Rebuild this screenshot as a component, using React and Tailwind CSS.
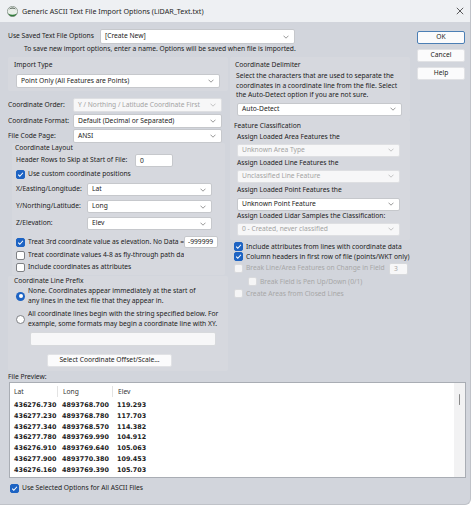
import React from "react"

const Chevron = ({ dis }) => (
  <svg width="6" height="4" viewBox="0 0 6 4" className="shrink-0">
    <path d="M0.5 0.7 L3 3.2 L5.5 0.7" fill="none" stroke={dis ? "#b5b5b5" : "#7d7d7d"} strokeWidth="0.8" />
  </svg>
)

const Select = ({ value, dis, cls }) => (
  <div
    className={`flex items-center justify-between border rounded-[2px] pl-[4px] pr-[5px] whitespace-nowrap overflow-hidden ${
      dis ? "bg-[#f7f7f8] border-[#dedfe2] text-[#a3a3a3]" : "bg-white border-[#c6c8cc] text-[#1b1b1b]"
    } ${cls}`}
  >
    <span>{value}</span>
    <Chevron dis={dis} />
  </div>
)

const Check = ({ on, dis }) => (
  <span
    className={`shrink-0 w-[9px] h-[9px] rounded-[2px] flex items-center justify-center border ${
      on ? "bg-[#1d63c3] border-[#1d63c3]" : dis ? "bg-[#f5f5f6] border-[#d9dadd]" : "bg-white border-[#7f8185]"
    }`}
  >
    {on && (
      <svg width="7" height="7" viewBox="0 0 8 8">
        <path d="M1.3 4.2 L3.2 6 L6.8 2" fill="none" stroke="white" strokeWidth="1.2" />
      </svg>
    )}
  </span>
)

const CheckRow = ({ on, dis, children, cls }) => (
  <div className={`flex items-center gap-[3px] h-[10px] whitespace-nowrap ${dis ? "text-[#a7a7a7]" : ""} ${cls}`}>
    <Check on={on} dis={dis} />
    <span className="leading-[10px]">{children}</span>
  </div>
)

const Radio = ({ on }) =>
  on ? (
    <span className="shrink-0 w-[9px] h-[9px] rounded-full bg-[#1d63c3] flex items-center justify-center">
      <span className="w-[4px] h-[4px] rounded-full bg-white" />
    </span>
  ) : (
    <span className="shrink-0 w-[9px] h-[9px] rounded-full bg-white border border-[#7f8185]" />
  )

const Btn = ({ children, ok, cls }) => (
  <div
    className={`flex items-center justify-center h-[13px] rounded-[2px] bg-[#fbfbfc] border ${
      ok ? "border-[#4c7fb5]" : "border-[#e1e2e5]"
    } ${cls}`}
  >
    {children}
  </div>
)

const rows = [
  ["436276.730", "4893768.700", "119.293"],
  ["436277.230", "4893768.780", "117.703"],
  ["436277.340", "4893768.570", "114.382"],
  ["436277.780", "4893769.990", "104.912"],
  ["436276.910", "4893769.640", "105.063"],
  ["436277.900", "4893770.380", "109.453"],
  ["436276.160", "4893769.390", "105.703"],
]

export default function App() {
  return (
    <div className="w-[474px] h-[506px] bg-white font-['Noto_Sans',sans-serif] text-[6.7px] text-[#1b1b1b]">
      <div className="w-[471px] h-[505px] bg-[#d2d5dc] rounded-br-[6px] border-r border-b border-[#bfc2c8] flex flex-col overflow-hidden">
        {/* title bar */}
        <div className="h-[22px] shrink-0 bg-[#eef0f3] flex items-center pl-[7px] pr-[6px]">
          <svg width="11" height="11" viewBox="0 0 12 12">
            <circle cx="6" cy="6" r="5.6" fill="#e9efe9" />
            <path d="M1 6.5 A5 5 0 0 0 11 6.5 A5 3 0 0 1 1 6.5Z" fill="#2f7d3a" />
            <path d="M2 4 A4.5 4.5 0 0 1 10 4 A4.5 2.5 0 0 0 2 4Z" fill="#3c4a3f" />
            <circle cx="6" cy="6" r="5.6" fill="none" stroke="#5c6b60" strokeWidth="0.6" />
          </svg>
          <span className="ml-[4px] text-[7.15px] text-[#1f1f1f]">Generic ASCII Text File Import Options (LiDAR_Text.txt)</span>
          <svg width="8" height="8" viewBox="0 0 8 8" className="ml-auto">
            <path d="M0.8 0.8 L7.2 7.2 M7.2 0.8 L0.8 7.2" stroke="#333" strokeWidth="0.8" />
          </svg>
        </div>

        {/* body */}
        <div className="flex-1 flex flex-col pl-[8px] pr-[5px] pt-[7px]">
          <div className="flex">
            <div className="w-[402px] flex flex-col">
              <div className="flex items-center h-[15px]">
                <span className="w-[92px] whitespace-nowrap">Use Saved Text File Options</span>
                <Select value="[Create New]" cls="w-[195px] h-[15px]" />
              </div>
              <div className="h-[10px] leading-[10px] pl-[16px] whitespace-nowrap">
                To save new import options, enter a name. Options will be saved when file is imported.
              </div>

              <div className="flex">
                {/* left column */}
                <div className="w-[220px] flex flex-col">
                  <div className="mt-[3px] pt-[3px] pb-[3px] bg-[#d6d8de] rounded-[2px]">
                    <div className="h-[10px] leading-[10px] pl-[6px]">Import Type</div>
                    <Select value="Point Only (All Features are Points)" cls="mt-[4px] ml-[8px] w-[204px] h-[14px]" />
                  </div>

                  <div className="mt-[7px] flex items-center h-[14px]">
                    <span className="w-[65px] whitespace-nowrap">Coordinate Order:</span>
                    <Select dis value="Y / Northing / Latitude Coordinate First" cls="w-[149px] h-[14px]" />
                  </div>
                  <div className="mt-[2px] flex items-center h-[14px]">
                    <span className="w-[65px] whitespace-nowrap">Coordinate Format:</span>
                    <Select value="Default (Decimal or Separated)" cls="w-[149px] h-[14px]" />
                  </div>
                  <div className="mt-[1px] flex items-center h-[14px]">
                    <span className="w-[65px] whitespace-nowrap">File Code Page:</span>
                    <Select value="ANSI" cls="w-[149px] h-[14px]" />
                  </div>

                  <div className="ml-[4px] w-[213px] bg-[#d6d8de] rounded-[2px] pb-[3px]">
                    <div className="h-[10px] leading-[10px] pl-[3px]">Coordinate Layout</div>
                    <div className="mt-[1px] flex items-center h-[13px] pl-[4px]">
                      <span className="w-[119px] whitespace-nowrap">Header Rows to Skip at Start of File:</span>
                      <div className="w-[38px] h-[13px] bg-white border border-[#c6c8cc] rounded-[2px] pl-[4px] leading-[11px]">0</div>
                    </div>
                    <CheckRow on cls="mt-[2px] pl-[4px]">Use custom coordinate positions</CheckRow>
                    {[
                      ["X/Easting/Longitude:", "Lat"],
                      ["Y/Northing/Latitude:", "Long"],
                      ["Z/Elevation:", "Elev"],
                    ].map(([l, v]) => (
                      <div key={l} className="mt-[4px] flex items-center h-[13px] pl-[4px]">
                        <span className="w-[71px] whitespace-nowrap">{l}</span>
                        <Select value={v} cls="w-[125px] h-[13px]" />
                      </div>
                    ))}
                    <div className="mt-[6px] flex items-center h-[12px] pl-[4px]">
                      <Check on />
                      <span className="ml-[3px] w-[156px] whitespace-nowrap">Treat 3rd coordinate value as elevation. No Data =</span>
                      <div className="w-[34px] h-[12px] bg-white border border-[#c6c8cc] rounded-[2px] pl-[3px] leading-[10px]">-999999</div>
                    </div>
                    <div className="mt-[2px] flex items-center h-[10px] pl-[4px]">
                      <Check />
                      <span className="ml-[3px] w-[156px] whitespace-nowrap overflow-hidden leading-[10px]">Treat coordinate values 4-8 as fly-through path da</span>
                    </div>
                    <CheckRow cls="mt-[2px] pl-[4px]">Include coordinates as attributes</CheckRow>
                  </div>

                  <div className="mt-[1px] bg-[#d6d8de] rounded-[2px] pb-[4px]">
                    <div className="h-[10px] leading-[10px] pl-[6px]">Coordinate Line Prefix</div>
                    <div className="flex items-center pl-[8px] gap-[3px]">
                      <Radio on />
                      <div className="leading-[10px]">
                        None. Coordinates appear immediately at the start of
                        <br />
                        any lines in the text file that they appear in.
                      </div>
                    </div>
                    <div className="mt-[3px] flex items-center pl-[8px] gap-[3px]">
                      <Radio />
                      <div className="leading-[10px]">
                        All coordinate lines begin with the string specified below. For
                        <br />
                        example, some formats may begin a coordinate line with XY.
                      </div>
                    </div>
                    <div className="mt-[3px] ml-[22px] w-[186px] h-[14px] bg-[#f7f7f8] border border-[#d7d9dc] rounded-[2px]" />
                    <Btn cls="mt-[8px] ml-[39px] w-[125px]">Select Coordinate Offset/Scale...</Btn>
                  </div>
                </div>

                {/* right column */}
                <div className="ml-[2px] w-[180px] flex flex-col">
                  <div className="mt-[3px] pt-[3px] pb-[4px] bg-[#d6d8de] rounded-[2px]">
                    <div className="h-[10px] leading-[10px] pl-[5px]">Coordinate Delimiter</div>
                    <div className="mt-[1px] pl-[6px] leading-[9.5px]">
                      Select the characters that are used to separate the
                      <br />
                      coordinates in a coordinate line from the file. Select
                      <br />
                      the Auto-Detect option if you are not sure.
                    </div>
                    <Select value="Auto-Detect" cls="mt-[3px] ml-[7px] w-[165px] h-[13px]" />
                  </div>
                  <div className="bg-[#d6d8de] rounded-[2px] pt-[1px] pb-[4px]">
                    <div className="h-[10px] leading-[10px] pl-[4px]">Feature Classification</div>
                    <div className="mt-[1px] h-[10px] leading-[10px] pl-[7px]">Assign Loaded Area Features the</div>
                    <Select dis value="Unknown Area Type" cls="mt-[2px] ml-[7px] w-[163px] h-[13px]" />
                    <div className="mt-[1px] h-[10px] leading-[10px] pl-[7px]">Assign Loaded Line Features the</div>
                    <Select dis value="Unclassified Line Feature" cls="mt-[2px] ml-[7px] w-[163px] h-[13px]" />
                    <div className="mt-[2px] h-[10px] leading-[10px] pl-[7px]">Assign Loaded Point Features the</div>
                    <Select value="Unknown Point Feature" cls="mt-[3px] ml-[7px] w-[163px] h-[13px]" />
                    <div className="h-[10px] leading-[10px] pl-[7px]">Assign Loaded Lidar Samples the Classification:</div>
                    <Select dis value="0 - Created, never classified" cls="mt-[2px] ml-[7px] w-[163px] h-[13px]" />
                  </div>
                  <CheckRow on cls="mt-[2px] pl-[4px]">Include attributes from lines with coordinate data</CheckRow>
                  <CheckRow on cls="pl-[4px]">Column headers in first row of file (points/WKT only)</CheckRow>
                  <div className="mt-[1px] flex items-center h-[12px] pl-[4px] pr-[2px] text-[#a7a7a7]">
                    <Check dis />
                    <span className="ml-[3px] whitespace-nowrap">Break Line/Area Features on Change in Field</span>
                    <div className="ml-auto w-[19px] h-[12px] bg-[#f7f7f8] border border-[#d7d9dc] rounded-[2px] pl-[4px] leading-[10px]">3</div>
                  </div>
                  <CheckRow dis cls="mt-[2px] pl-[18px]">Break Field is Pen Up/Down (0/1)</CheckRow>
                  <CheckRow dis cls="mt-[2px] pl-[4px]">Create Areas from Closed Lines</CheckRow>
                </div>
              </div>
            </div>

            {/* buttons */}
            <div className="ml-auto w-[48px] pt-[2px] flex flex-col gap-[5px]">
              <Btn ok>OK</Btn>
              <Btn>Cancel</Btn>
              <Btn>Help</Btn>
            </div>
          </div>

          {/* file preview */}
          <div className="mt-[1px] h-[10px] leading-[10px]">File Preview:</div>
          <div className="ml-[1px] w-[457px] h-[96px] bg-white border border-[#a9adb4] flex">
            <div className="flex-1 pl-[4px] pt-[3px]">
              <div className="grid grid-cols-[43px_55px_1fr] h-[11px] leading-[11px] text-[#333]">
                <span>Lat</span>
                <span className="pl-[5px] border-l border-[#e3e3e3]">Long</span>
                <span className="pl-[5px] border-l border-[#e3e3e3]">Elev</span>
              </div>
              <div className="mt-[3px] font-['DejaVu_Sans',sans-serif] font-bold text-[6.4px] text-[#202020]">
                {rows.map((r) => (
                  <div key={r[0]} className="grid grid-cols-[43px_55px_1fr] h-[10.8px] leading-[10.8px]">
                    <span>{r[0]}</span>
                    <span className="pl-[5px]">{r[1]}</span>
                    <span className="pl-[5px]">{r[2]}</span>
                  </div>
                ))}
              </div>
            </div>
            <div className="w-[11px] bg-[#f2f2f3] flex justify-center pt-[11px]">
              <div className="w-[1.5px] h-[11px] bg-[#8a8a8a] rounded-full" />
            </div>
          </div>
          <CheckRow on cls="mt-[5px] ml-[2px]">Use Selected Options for All ASCII Files</CheckRow>
        </div>
      </div>
    </div>
  )
}
